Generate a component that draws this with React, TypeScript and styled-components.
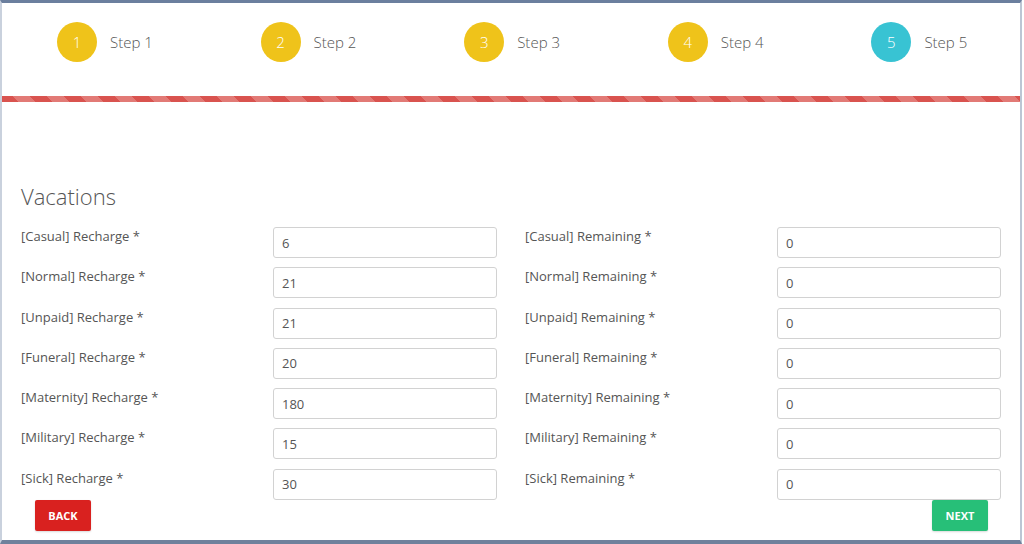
import * as React from "react";
import styled, { createGlobalStyle } from "styled-components";

const GlobalStyle = createGlobalStyle`
  html, body {
    margin: 0;
    padding: 0;
    background: #ffffff;
  }
  body {
    font-family: "Open Sans", "Liberation Sans", Arial, sans-serif;
    color: #555;
  }
`;

const Frame = styled.div`
  box-sizing: border-box;
  width: 1022px;
  height: 544px;
  border-top: 3px solid #6b7f9e;
  border-left: 2px solid #c9d1dd;
  border-right: 2px solid #bcc6d4;
  border-bottom: 4px solid #6f819c;
  display: flex;
  flex-direction: column;
  overflow: hidden;
`;

const StepsBar = styled.div`
  display: grid;
  grid-template-columns: repeat(5, 1fr);
  height: 93px;
  box-sizing: border-box;
  padding-top: 19px;
`;

const Step = styled.div`
  display: flex;
  align-items: center;
  gap: 13px;
  padding-left: 55px;
  height: 40px;
`;

const Circle = styled.div<{ $active?: boolean }>`
  width: 40px;
  height: 40px;
  border-radius: 50%;
  background: ${(p) => (p.$active ? "#38c3d3" : "#efc31a")};
  color: #fff;
  font-size: 15px;
  font-weight: 300;
  display: flex;
  align-items: center;
  justify-content: center;
`;

const StepLabel = styled.span`
  font-size: 15px;
  font-weight: 300;
  color: #555;
`;

const Stripe = styled.div`
  height: 6px;
  background: repeating-linear-gradient(
    45deg,
    #d9534f 0px,
    #d9534f 12px,
    #e27a76 12px,
    #e27a76 24px
  );
`;

const Content = styled.div`
  padding: 80px 19px 0 19px;
`;

const Heading = styled.h2`
  margin: 0 0 17px 0;
  font-size: 22px;
  font-weight: 300;
  color: #555;
  line-height: 28px;
`;

const Columns = styled.div`
  display: grid;
  grid-template-columns: 1fr 1fr;
  column-gap: 28px;
`;

const Column = styled.div`
  display: flex;
  flex-direction: column;
  gap: 10.3px;
`;

const Row = styled.div`
  display: grid;
  grid-template-columns: 1fr 224px;
  height: 30px;
`;

const Label = styled.label`
  font-size: 13px;
  line-height: 18px;
  color: #555;
`;

const Input = styled.input`
  box-sizing: border-box;
  width: 224px;
  height: 31px;
  border: 1px solid #d2d2d2;
  border-radius: 3px;
  padding: 0 8px;
  font-family: "Open Sans", "Liberation Sans", Arial, sans-serif;
  font-size: 13px;
  color: #555;
  background: #fff;
  outline: none;
`;

const Actions = styled.div`
  display: flex;
  justify-content: space-between;
  padding: 1px 13px 0 14px;
`;

const Button = styled.button<{ $variant: "back" | "next" }>`
  width: 56px;
  height: 31px;
  border: none;
  border-radius: 2px;
  background: ${(p) => (p.$variant === "back" ? "#d9211f" : "#27bf78")};
  color: #fff;
  font-family: "Open Sans", "Liberation Sans", Arial, sans-serif;
  font-size: 11px;
  font-weight: 700;
  box-shadow: 0 1px 2px rgba(0, 0, 0, 0.15);
  cursor: pointer;
`;

const types = [
  { name: "Casual", recharge: "6" },
  { name: "Normal", recharge: "21" },
  { name: "Unpaid", recharge: "21" },
  { name: "Funeral", recharge: "20" },
  { name: "Maternity", recharge: "180" },
  { name: "Military", recharge: "15" },
  { name: "Sick", recharge: "30" },
];

const App = () => {
  return (
    <>
      <GlobalStyle />
      <Frame>
        <StepsBar>
          {[1, 2, 3, 4, 5].map((n) => (
            <Step key={n}>
              <Circle $active={n === 5}>{n}</Circle>
              <StepLabel>Step {n}</StepLabel>
            </Step>
          ))}
        </StepsBar>
        <Stripe />
        <Content>
          <Heading>Vacations</Heading>
          <Columns>
            <Column>
              {types.map((t) => (
                <Row key={t.name}>
                  <Label>[{t.name}] Recharge *</Label>
                  <Input defaultValue={t.recharge} />
                </Row>
              ))}
            </Column>
            <Column>
              {types.map((t) => (
                <Row key={t.name}>
                  <Label>[{t.name}] Remaining *</Label>
                  <Input defaultValue="0" />
                </Row>
              ))}
            </Column>
          </Columns>
          <Actions>
            <Button $variant="back">BACK</Button>
            <Button $variant="next">NEXT</Button>
          </Actions>
        </Content>
      </Frame>
    </>
  );
};

export default App;
